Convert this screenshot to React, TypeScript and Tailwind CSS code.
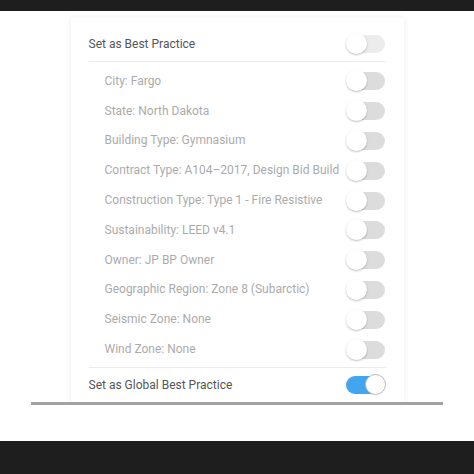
const items = [
  "City: Fargo",
  "State: North Dakota",
  "Building Type: Gymnasium",
  "Contract Type: A104\u20132017, Design Bid Build",
  "Construction Type: Type 1 - Fire Resistive",
  "Sustainability: LEED v4.1",
  "Owner: JP BP Owner",
  "Geographic Region: Zone 8 (Subarctic)",
  "Seismic Zone: None",
  "Wind Zone: None",
];

function Toggle({ on = false, light = false }: { on?: boolean; light?: boolean }) {
  return (
    <div className="relative h-[21px] w-[40px] shrink-0">
      <div
        className={
          on
            ? "absolute left-0 right-[4px] top-[2px] h-[18px] rounded-full bg-[#42a6ee]"
            : light
            ? "absolute left-[2px] right-[1px] top-[2px] h-[18px] rounded-full bg-[#ececec]"
            : "absolute left-[2px] right-[1px] top-[2px] h-[18px] rounded-full bg-[#dcdcdc]"
        }
      />
      <div
        className={
          on
            ? "absolute right-0 top-0 h-[21px] w-[21px] rounded-full border border-[#b8b8b8] bg-white"
            : "absolute left-0 top-0 h-[21px] w-[21px] rounded-full bg-white shadow-[0_1px_2px_rgba(0,0,0,0.25)]"
        }
      />
    </div>
  );
}

export default function App() {
  return (
    <div className="flex h-[474px] w-[474px] flex-col bg-white font-['Roboto',sans-serif]">
      <div className="h-[11px] bg-[#1e1e1e]" />
      <div className="flex flex-1 flex-col items-center pt-[7px]">
        <div className="w-[333px] bg-white px-[18px] pt-[8px] shadow-[0_0_6px_rgba(0,0,0,0.08)]">
          <div className="flex h-[36px] items-center justify-between border-b border-[#ebebeb]">
            <span className="text-[12px] text-[#555]">Set as Best Practice</span>
            <Toggle light />
          </div>
          <div className="flex flex-col pt-[4px] pb-[3px]">
            {items.map((t) => (
              <div key={t} className="flex h-[29.8px] items-center justify-between pl-[16px]">
                <span className="text-[12px] text-[#ababab]">{t}</span>
                <Toggle />
              </div>
            ))}
          </div>
          <div className="flex h-[35px] items-center justify-between border-t border-[#ebebeb]">
            <span className="text-[12px] text-[#555]">Set as Global Best Practice</span>
            <Toggle on />
          </div>
        </div>
        <div className="h-[3px] w-[412px] bg-[#a2a2a2]" />
      </div>
      <div className="h-[33px] bg-[#1e1e1e]" />
    </div>
  );
}
